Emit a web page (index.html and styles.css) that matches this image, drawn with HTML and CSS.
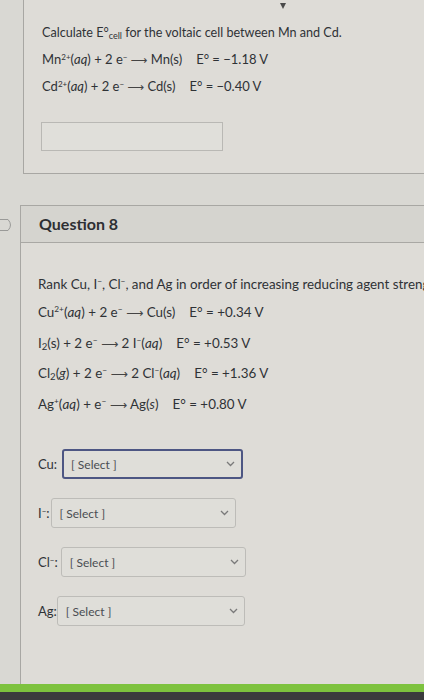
FILE: index.html
```html
<!DOCTYPE html>
<html lang="en">
<head>
<meta charset="utf-8">
<title>Quiz</title>
<link rel="stylesheet" href="styles.css">
</head>
<body>
<div class="page">
  <svg class="cursor" width="8" height="8" viewBox="0 0 8 8"><path d="M1 1 L7 1 L4 7 Z" fill="#4a4a4a"/></svg>
  <section class="card top-card">
    <p class="line first">Calculate E°<sub>cell</sub> for the voltaic cell between Mn and Cd.</p>
    <p class="line eq">Mn<sup>2+</sup>(<i>aq</i>) + 2 e<sup>−</sup> <span class="arr">⟶</span> Mn(s)<span class="pot">E° = −1.18 V</span></p>
    <p class="line eq">Cd<sup>2+</sup>(<i>aq</i>) + 2 e<sup>−</sup> <span class="arr">⟶</span> Cd(s)<span class="pot">E° = −0.40 V</span></p>
    <div class="answer-box"></div>
  </section>

  <div class="q-wrap">
    <svg class="tab" width="14" height="14" viewBox="0 0 14 14"><path d="M-1 1.5 H8 Q13 7 8 12.5 H-1" fill="none" stroke="#9a9a98" stroke-width="1"/></svg>
    <section class="card q-card">
      <header class="q-head">Question 8</header>
      <div class="q-body">
        <p class="rank">Rank Cu, I<sup>−</sup>, Cl<sup>−</sup>, and Ag in order of increasing reducing agent strength.</p>
        <p class="eq2">Cu<sup>2+</sup>(<i>aq</i>) + 2 e<sup>−</sup> <span class="arr">⟶</span> Cu(s)<span class="pot">E° = +0.34 V</span></p>
        <p class="eq2">I<sub>2</sub>(s) + 2 e<sup>−</sup> <span class="arr">⟶</span> 2 I<sup>−</sup>(<i>aq</i>)<span class="pot">E° = +0.53 V</span></p>
        <p class="eq2">Cl<sub>2</sub>(<i>g</i>) + 2 e<sup>−</sup> <span class="arr">⟶</span> 2 Cl<sup>−</sup>(<i>aq</i>)<span class="pot">E° = +1.36 V</span></p>
        <p class="eq2">Ag<sup>+</sup>(<i>aq</i>) + e<sup>−</sup> <span class="arr">⟶</span> Ag(<i>s</i>)<span class="pot">E° = +0.80 V</span></p>

        <div class="rows">
          <div class="row r-cu"><span class="lbl">Cu:</span><div class="sel focus"><span>[ Select ]</span><svg class="chev" width="9" height="6" viewBox="0 0 9 6"><path d="M1 1 L4.5 4.5 L8 1" fill="none" stroke="#7a7a7a" stroke-width="1.3"/></svg></div></div>
          <div class="row r-i"><span class="lbl">I<sup>−</sup>:</span><div class="sel"><span>[ Select ]</span><svg class="chev" width="9" height="6" viewBox="0 0 9 6"><path d="M1 1 L4.5 4.5 L8 1" fill="none" stroke="#7a7a7a" stroke-width="1.3"/></svg></div></div>
          <div class="row r-cl"><span class="lbl">Cl<sup>−</sup>:</span><div class="sel"><span>[ Select ]</span><svg class="chev" width="9" height="6" viewBox="0 0 9 6"><path d="M1 1 L4.5 4.5 L8 1" fill="none" stroke="#7a7a7a" stroke-width="1.3"/></svg></div></div>
          <div class="row r-ag"><span class="lbl">Ag:</span><div class="sel"><span>[ Select ]</span><svg class="chev" width="9" height="6" viewBox="0 0 9 6"><path d="M1 1 L4.5 4.5 L8 1" fill="none" stroke="#7a7a7a" stroke-width="1.3"/></svg></div></div>
        </div>
      </div>
    </section>
  </div>
  <div class="green-bar"></div>
  <div class="dark-bar"></div>
</div>
</body>
</html>
```

FILE: styles.css
```css
html, body {
  margin: 0;
  padding: 0;
}
body {
  background: #d9d8d3;
  font-family: Lato, "Open Sans", "Liberation Sans", sans-serif;
  color: #2f3236;
  width: 424px;
  height: 700px;
  overflow: hidden;
}
.page {
  position: relative;
  width: 424px;
  height: 700px;
  display: flex;
  flex-direction: column;
  overflow: hidden;
}
.cursor {
  position: absolute;
  left: 279px;
  top: 2px;
}
p { margin: 0; }
sup { font-size: 0.62em; vertical-align: 0.55em; line-height: 0; }
sub { font-size: 0.72em; vertical-align: -0.25em; line-height: 0; }
.arr { font-family: "DejaVu Sans", sans-serif; font-size: 0.9em; color: #444; }
.pot { margin-left: 14px; }

.card {
  background: #dedcd7;
  border-left: 1px solid #a8a7a3;
}
.top-card {
  margin-left: 23px;
  margin-right: -10px;
  padding: 20px 0 22px 18px;
  border-bottom: 1px solid #a8a7a3;
  font-size: 13px;
}
.top-card .line {
  line-height: 26px;
  white-space: nowrap;
}
.top-card .line.first { font-size: 12.6px; }
.answer-box {
  margin-top: 22px;
  width: 180px;
  height: 27px;
  border: 1px solid #b9b8b4;
  background: #e0dfda;
  margin-left: -1px;
}

.q-wrap {
  margin-top: 31px;
  display: flex;
  align-items: stretch;
  flex: 1;
}
.tab {
  flex: none;
  margin-top: 13px;
  width: 14px;
  height: 14px;
  margin-right: 6px;
}
.q-card {
  flex: 1;
  margin-right: -10px;
  border-top: 1px solid #a8a7a3;
  display: flex;
  flex-direction: column;
}
.q-head {
  height: 36px;
  line-height: 36px;
  padding-left: 18px;
  font-size: 16px;
  font-weight: 700;
  color: #2d2f33;
  background: #d5d4cf;
  border-bottom: 1px solid #a9a8a4;
}
.q-body {
  flex: 1;
  padding: 28px 0 0 17px;
  font-size: 13.4px;
  white-space: nowrap;
}
.rank {
  font-size: 13.4px;
  line-height: 27px;
}
.eq2 {
  line-height: 29.5px;
}
.rows {
  margin-top: 29px;
  display: flex;
  flex-direction: column;
  gap: 19px;
}
.row {
  display: flex;
  align-items: center;
  height: 30px;
  font-size: 13px;
}
.lbl { margin-right: 4px; }
.sel {
  box-sizing: border-box;
  width: 185px;
  height: 30px;
  border: 1px solid #bdbcb8;
  border-radius: 3px;
  background: #dfded9;
  display: flex;
  align-items: center;
  justify-content: space-between;
  padding: 0 6px 0 8px;
  font-size: 12px;
  color: #4a4d52;
}
.sel.focus {
  border: 2px solid #4d5683;
  width: 181px;
  padding-left: 7px;
}
.r-cu .lbl { margin-right: 5px; }
.r-i .lbl { margin-right: 1px; }
.r-cl .lbl { margin-right: 3px; }
.r-ag .lbl { margin-right: 0; }
.r-ag .sel { width: 188px; }
.chev { flex: none; }

.green-bar {
  flex: none;
  height: 8px;
  background: #7dc23e;
}
.dark-bar {
  flex: none;
  height: 8px;
  background: #3b3b3d;
}
```
